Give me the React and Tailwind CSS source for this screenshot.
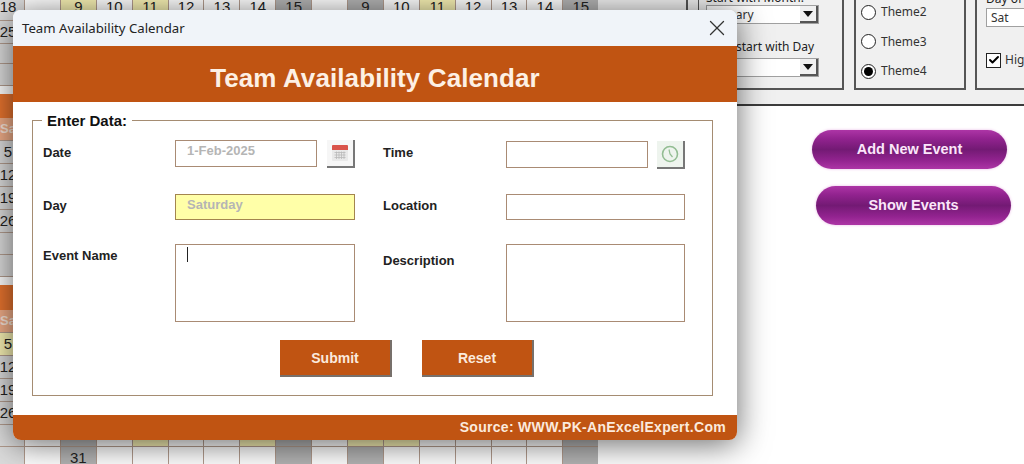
import { X, Check } from "lucide-react";

const SANS = "font-['Liberation_Sans',Arial,sans-serif]";
const UI = "font-['Noto_Sans','Open_Sans',sans-serif]";

const WEEK = [9, 10, 11, 12, 13, 14, 15];

const cellBg = { w: "bg-white", y: "bg-[#f8f2b4]", g: "bg-[#b4b4b4]", l: "bg-[#dcdcdc]", o: "bg-[#e8742f]", s: "bg-[#f0ad88]" };

// left column only matters beside the dialog, the rest sits behind it
const ROWS = [
  { h: "h-[21px]", top: true, first: "18", kinds: "lwywywwwgwgwywwwg", days: ["", ...WEEK, "", ...WEEK] },
  { h: "h-[23px]", first: "25" },
  { h: "h-[20px]" },
  { h: "h-[22px]" },
  { h: "h-[8px]", kind: "w", plain: true },
  { h: "h-[24px]", kind: "o", plain: true },
  { h: "h-[23px]", first: "Sa", kind: "s", head: true },
  { h: "h-[23px]", first: "5" },
  { h: "h-[23px]", first: "12" },
  { h: "h-[23px]", first: "19" },
  { h: "h-[23px]", first: "26" },
  { h: "h-[22px]" },
  { h: "h-[22px]" },
  { h: "h-[8px]", kind: "w", plain: true },
  { h: "h-[25px]", kind: "o", plain: true },
  { h: "h-[23px]", first: "Sa", kind: "s", head: true },
  { h: "h-[23px]", first: "5", kind: "y" },
  { h: "h-[23px]", first: "12" },
  { h: "h-[23px]", first: "19" },
  { h: "h-[23px]", first: "26" },
  { h: "h-[22px]", kinds: "lwgwywwygwyywwwwg" },
  { h: "h-[23px]", kinds: "lwgwwwwwgwgwwwwwg", days: ["", 31] },
];

const CalRow = ({ row }) => {
  if (row.plain) return <div className={`${row.h} ${cellBg[row.kind]}`} />;
  const kinds = row.kinds || "lwwwwwwwwwwwwwwww";
  return (
    <div className={`${row.h} grid grid-cols-[24px_repeat(16,35.9px)] text-[15px] leading-[14px] text-[#222] ${SANS}`}>
      <div className={`flex justify-center pr-[8px] whitespace-nowrap border-b border-[#b39c8e] ${row.top ? "items-start" : "items-center"} ${row.kind ? cellBg[row.kind] : cellBg.l} ${row.head ? "font-bold text-[#f9e6da] text-[13px]" : ""}`}>
        {row.first}
      </div>
      {kinds.slice(1).split("").map((k, i) => (
        <div key={i} className={`flex justify-center border-l border-b border-[#b39c8e] ${row.top ? "items-start" : "items-center"} ${cellBg[k]}`}>
          {row.days ? row.days[i] : ""}
        </div>
      ))}
    </div>
  );
};

const Combo = ({ value, className }) => (
  <div className={`h-[19px] flex justify-between bg-white border border-[#a0a0a0] ${className}`}>
    <span className="pl-[4px] text-[12px] leading-[17px] text-[#333]">{value}</span>
    <div className="w-[18px] flex items-center justify-center bg-[#f0f0f0] border-r-2 border-b-2 border-[#555]">
      <svg width="10" height="6" viewBox="0 0 10 6"><path d="M0 0h10L5 6z" fill="#111" /></svg>
    </div>
  </div>
);

const Radio = ({ label, on }) => (
  <div className="flex items-center gap-[5px] h-[16px]">
    <div className="w-[15px] h-[15px] rounded-full border border-[#222] bg-white flex items-center justify-center">
      {on && <div className="w-[9px] h-[9px] rounded-full bg-black" />}
    </div>
    <span className="text-[12px] text-[#333]">{label}</span>
  </div>
);

const PillButton = ({ label, className }) => (
  <div className={`w-[195px] h-[39px] rounded-full flex items-center justify-center text-[14.5px] font-bold text-[#fbe6fa] ${SANS} bg-[linear-gradient(180deg,#ad35a6_0%,#92238f_22%,#731a74_50%,#92238f_78%,#ad35a6_100%)] shadow-[0_0_3px_#e9b8e6] ${className}`}>
    {label}
  </div>
);

const Label = ({ children, className }) => (
  <div className={`text-[13px] font-bold leading-[15px] text-[#222] ${className}`}>{children}</div>
);

const Field = ({ className, children }) => (
  <div className={`border border-[#a98b74] bg-white text-[13px] font-bold text-[#b5b5b5] pl-[11px] ${className}`}>
    {children}
  </div>
);

const IconButton = ({ className, children }) => (
  <div className={`w-[28px] h-[28px] flex items-center justify-center border-r-2 border-b-2 border-[#777] ${className}`}>
    {children}
  </div>
);

const ActionButton = ({ label }) => (
  <div className="w-[112px] h-[37px] pt-[1px] flex items-center justify-center bg-[#c05412] border-r-2 border-b-2 border-[#77706b] text-[14px] font-bold text-[#fbeadd]">
    {label}
  </div>
);

export default function App() {
  return (
    <div className={`relative w-[1024px] h-[464px] overflow-hidden bg-white flex ${UI}`}>
      <div className="w-[598px] shrink-0 overflow-hidden">
        {ROWS.map((row, i) => <CalRow key={i} row={row} />)}
      </div>

      <div className="flex-1 min-w-0 overflow-hidden">
        <div className="h-[106px] bg-[#f0f0f0] border-b-2 border-[#3c3c3c] flex gap-[10px] items-start">
          <div className="w-[90px] h-[89px] shrink-0 border-r-2 border-[#555]" />
          <div className="w-[146px] h-[90px] shrink-0 border-l border-r-2 border-b-2 border-[#555] pl-[7px] pr-[23px] overflow-hidden">
            <div className="text-[12px] leading-[13px] -mt-[9px] text-[#222] whitespace-nowrap">Start with Month:</div>
            <Combo value="January" className="mt-[1px]" />
            <div className="mt-[14px] -ml-[4px] text-[12px] leading-[18px] text-[#222] whitespace-nowrap">Week start with Day</div>
            <Combo value="" className="mt-[2px]" />
          </div>
          <div className="w-[112px] h-[90px] shrink-0 border-l-2 border-r-2 border-b-2 border-[#555] pl-[5px] pt-[4px] flex flex-col gap-[13.5px]">
            <Radio label="Theme2" />
            <Radio label="Theme3" />
            <Radio label="Theme4" on />
          </div>
          <div className="w-[120px] h-[90px] shrink-0 -ml-[1px] border-l-2 border-b-2 border-[#555] pl-[9px]">
            <div className="text-[12px] leading-[13px] -mt-[8px] text-[#222] whitespace-nowrap">Day of Week</div>
            <div className="mt-[3px] h-[19px] bg-white border border-[#a0a0a0] pl-[4px] text-[12px] leading-[17px] text-[#333]">Sat</div>
            <div className="mt-[24px] flex items-center gap-[4px]">
              <div className="w-[15px] h-[15px] shrink-0 border border-[#222] bg-white flex items-center justify-center">
                <Check size={12} strokeWidth={4} color="#000" />
              </div>
              <span className="text-[12px] text-[#333] whitespace-nowrap">Highlight Weekends</span>
            </div>
          </div>
        </div>
        <PillButton label="Add New Event" className="ml-[214px] mt-[24px]" />
        <PillButton label="Show Events" className="ml-[218px] mt-[17px]" />
      </div>

      {/* dialog */}
      <div className={`absolute left-[13px] top-[10px] w-[724px] h-[430px] rounded-[8px] bg-white shadow-[0_4px_32px_rgba(0,0,0,0.6)] flex flex-col overflow-hidden ${SANS}`}>
        <div className="h-[36px] shrink-0 bg-[#f0f4f9] flex items-center justify-between pl-[9px] pr-[7px]">
          <span className={`text-[13.2px] pt-[2px] text-[#222] ${UI}`}>Team Availability Calendar</span>
          <X size={26} strokeWidth={1.2} color="#333" />
        </div>
        <div className="h-[56px] pt-[8px] shrink-0 bg-[#c05412] flex items-center justify-center text-[26px] font-bold tracking-[0.1px] text-[#fdf0e4]">
          Team Availability Calendar
        </div>

        <fieldset className="ml-[19px] w-[681px] mt-[10px] h-[284px] border border-[#a58c72]">
          <legend className="ml-[9px] px-[5px] text-[15px] leading-[17px] font-bold text-[#111]">Enter Data:</legend>

          <div className="pt-[11px] px-[10px] flex flex-col">
            <div className="h-[28px] flex items-start">
              <Label className="w-[132px] mt-[5px]">Date</Label>
              <Field className="w-[142px] h-[27px] leading-[20px]">1-Feb-2025</Field>
              <IconButton className="ml-[10px] bg-[#f6f6f6]">
                <svg width="18" height="18" viewBox="0 0 18 18">
                  <rect x="1" y="1" width="16" height="16" rx="1" fill="#e9e9e9" />
                  <path d="M1 2a1 1 0 0 1 1-1h14a1 1 0 0 1 1 1v4H1z" fill="#d9534a" />
                  <path d="M3.5 8.5h11M3.5 11h11M3.5 13.5h11M5.5 7.5v7.5M8 7.5v7.5M10.5 7.5v7.5M13 7.5v7.5" stroke="#b9b9b9" strokeWidth="0.8" />
                </svg>
              </IconButton>
              <Label className="w-[123px] ml-[28px] mt-[5px]">Time</Label>
              <Field className="w-[142px] h-[27px] mt-[1px]" />
              <IconButton className="ml-[9px] mt-[1px] bg-[#eef4ee]">
                <svg width="18" height="18" viewBox="0 0 18 18" fill="none" stroke="#93bd93" strokeWidth="1.6">
                  <circle cx="9" cy="9" r="7.5" />
                  <path d="M8 4.5 9 9l2.5 3" strokeWidth="1.2" />
                </svg>
              </IconButton>
            </div>

            <div className="h-[26px] mt-[26px] flex items-start">
              <Label className="w-[132px] mt-[4px]">Day</Label>
              <Field className="w-[180px] h-[26px] leading-[20px] bg-[#ffffa8]! border-[#a3854f]!">Saturday</Field>
              <Label className="w-[123px] ml-[28px] mt-[4px]">Location</Label>
              <Field className="w-[179px] h-[26px]" />
            </div>

            <div className="h-[78px] mt-[24px] flex items-start">
              <Label className="w-[132px] mt-[4px]">Event Name</Label>
              <Field className="w-[180px] h-[78px]">
                <div className="w-px h-[15px] mt-[2px] bg-[#222]" />
              </Field>
              <Label className="w-[123px] ml-[28px] mt-[9px]">Description</Label>
              <Field className="w-[179px] h-[78px]" />
            </div>

            <div className="mt-[18px] ml-[237px] flex gap-[30px]">
              <ActionButton label="Submit" />
              <ActionButton label="Reset" />
            </div>
          </div>
        </fieldset>

        <div className="mt-auto h-[25px] shrink-0 bg-[#c05412] flex items-center justify-end pr-[11px] text-[14px] font-bold tracking-[0.3px] text-[#fbeadd]">
          Source: WWW.PK-AnExcelExpert.Com
        </div>
      </div>
    </div>
  );
}
